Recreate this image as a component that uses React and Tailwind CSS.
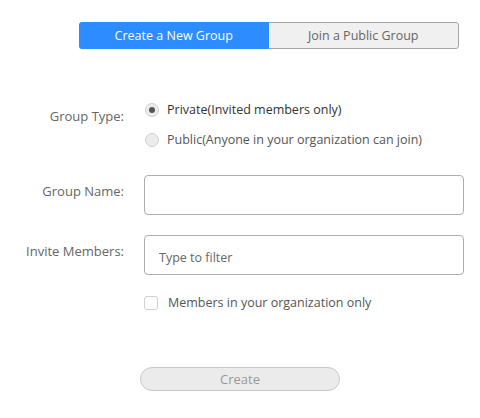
import React, { useState } from "react";

function Radio({ checked, label, onClick }) {
  return (
    <button
      type="button"
      onClick={onClick}
      className="flex h-[16px] items-center gap-[8px] text-left text-[12.5px]"
    >
      <span className="flex h-[14px] w-[14px] items-center justify-center rounded-full border border-[#d0d0d0] bg-[#ececec]">
        {checked && <span className="h-[6px] w-[6px] rounded-full bg-[#555]" />}
      </span>
      <span className={checked ? "text-[#333]" : "text-[#555]"}>{label}</span>
    </button>
  );
}

export default function App() {
  const [tab, setTab] = useState("create");
  const [type, setType] = useState("private");
  const [orgOnly, setOrgOnly] = useState(false);

  return (
    <div
      className="h-[418px] w-[480px] overflow-hidden bg-white text-[13px] leading-[16px] text-[#666]"
      style={{ fontFamily: '"Open Sans", "Noto Sans", sans-serif' }}
    >
      <div className="ml-[79px] mt-[22px] flex h-[27px] w-[380px] overflow-hidden rounded-[3px] text-[12.5px]">
        <button
          type="button"
          onClick={() => setTab("create")}
          className={
            tab === "create"
              ? "flex-1 bg-[#2d8cff] text-white"
              : "flex-1 border border-[#a6a6a6] bg-[#f0f0f0] text-[#666]"
          }
        >
          Create a New Group
        </button>
        <button
          type="button"
          onClick={() => setTab("join")}
          className={
            tab === "join"
              ? "flex-1 bg-[#2d8cff] text-white"
              : "flex-1 rounded-r-[3px] border border-l-0 border-[#a6a6a6] bg-[#f0f0f0] text-[#666]"
          }
        >
          Join a Public Group
        </button>
      </div>

      <div className="mt-[53px] flex">
        <div className="w-[124px] pt-[6px] text-right">Group Type:</div>
        <div className="ml-[21px] flex flex-col gap-[14px]">
          <Radio
            checked={type === "private"}
            label="Private(Invited members only)"
            onClick={() => setType("private")}
          />
          <Radio
            checked={type === "public"}
            label="Public(Anyone in your organization can join)"
            onClick={() => setType("public")}
          />
        </div>
      </div>

      <div className="mt-[27px] flex">
        <div className="w-[124px] pt-[8px] text-right">Group Name:</div>
        <input className="ml-[20px] h-[40px] w-[320px] rounded-[4px] border border-[#adadad] px-[14px] text-[12.5px] text-[#333] outline-none" />
      </div>

      <div className="mt-[20px] flex">
        <div className="w-[124px] pt-[8px] text-right">Invite Members:</div>
        <input
          placeholder="Type to filter"
          className="ml-[20px] h-[40px] w-[320px] rounded-[4px] border border-[#adadad] px-[14px] pt-[5px] text-[12.5px] text-[#333] outline-none placeholder:text-[#666]"
        />
      </div>

      <label className="ml-[144px] mt-[20px] flex h-[15px] cursor-pointer items-center gap-[10px] text-[12.5px]">
        <input
          type="checkbox"
          checked={orgOnly}
          onChange={(e) => setOrgOnly(e.target.checked)}
          className="hidden"
        />
        <span className="flex h-[14px] w-[14px] items-center justify-center rounded-[3px] border border-[#d0d0d0] bg-white text-[10px] text-[#555]">
          {orgOnly ? "✓" : ""}
        </span>
        <span className="text-[#555]">Members in your organization only</span>
      </label>

      <div className="mt-[57px] flex justify-center">
        <button
          type="button"
          disabled
          className="h-[24px] w-[200px] rounded-full border border-[#c8c8c8] bg-[#ebebeb] text-[#999]"
        >
          Create
        </button>
      </div>
    </div>
  );
}
